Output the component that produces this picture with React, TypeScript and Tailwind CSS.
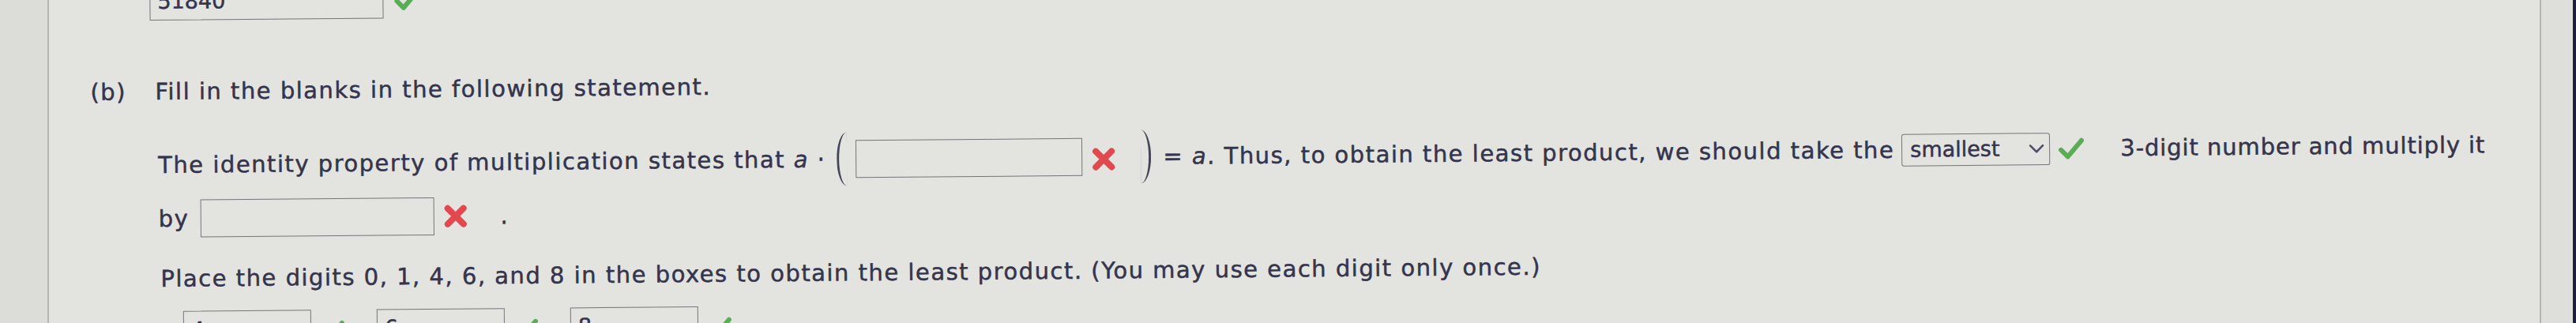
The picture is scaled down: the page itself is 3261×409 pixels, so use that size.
import React from 'react';

function Check({ className = '' }: { className?: string }) {
  return (
    <svg viewBox="0 0 36 30" className={`w-[36px] h-[30px] shrink-0 ${className}`}>
      <path
        d="M5 17 L13.5 25.5 L31 5"
        fill="none"
        stroke="#59ae55"
        strokeWidth="6"
        strokeLinecap="round"
        strokeLinejoin="round"
      />
    </svg>
  );
}

function Cross({ className = '' }: { className?: string }) {
  return (
    <svg viewBox="0 0 32 30" className={`w-[32px] h-[30px] shrink-0 ${className}`}>
      <path d="M6 5 L26 25 M26 5 L6 25" stroke="#e2494e" strokeWidth="8" strokeLinecap="round" />
    </svg>
  );
}

function Blank({ className = '', value = '' }: { className?: string; value?: string }) {
  return (
    <div
      className={`h-[48px] shrink-0 flex items-center pl-[9px] border-[1.5px] border-[#75757b] text-[27px] tracking-normal leading-normal ${className}`}
    >
      {value}
    </div>
  );
}

export default function App() {
  return (
    <div className="h-[409px] w-[3261px] overflow-hidden flex bg-[#e3e4e0] font-['DejaVu_Sans',Verdana,sans-serif] text-[#34344c] [-webkit-text-stroke:0.5px_#34344c]">
      <div className="w-[60px] shrink-0 bg-[#dcddd9]" />
      <div className="w-[2px] shrink-0 bg-[#b5b6b2]" />

      <main className="relative flex-1 overflow-hidden">
        <div className="rotate-[-0.5deg] origin-[138px_210px] pl-[53px] text-[29px] tracking-[1.5px]">
          {/* previous answer */}
          <div className="-mt-[22px] ml-[76px] h-[48px] flex items-center">
            <Blank className="w-[296px]" value="51840" />
            <Check className="ml-[12px]" />
          </div>

          {/* heading */}
          <div className="mt-[70px] flex leading-[40px]">
            <span className="w-[82px] shrink-0">(b)</span>
            <span>Fill in the blanks in the following statement.</span>
          </div>

          {/* identity statement */}
          <div className="mt-[38px] h-[70px] pl-[85px] flex items-center leading-[40px] whitespace-nowrap">
            <span>
              The identity property of multiplication states that <i>a</i> ·
            </span>
            <span className="ml-[14px] block w-[13px] h-[68px] border-l-[3px] border-[#45455a] rounded-l-[13px_34px]" />
            <Blank className="ml-[11px] w-[287px]" />
            <Cross className="ml-[11px] mt-[6px]" />
            <span className="ml-[31px] block w-[13px] h-[68px] border-r-[3px] border-[#45455a] rounded-r-[13px_34px]" />
            <span className="ml-[15px]">
              = <i>a</i>. Thus, to obtain the least product, we should take the
            </span>
            <div className="ml-[9px] w-[188px] h-[41px] shrink-0 flex items-center pl-[10px] pr-[6px] border-[1.5px] border-[#75757b] rounded-[3px] text-[27px] tracking-normal leading-normal">
              <span className="flex-1">smallest</span>
              <svg viewBox="0 0 20 12" className="w-[20px] h-[12px]">
                <path d="M2 2 L10 10 L18 2" fill="none" stroke="#50506a" strokeWidth="2.6" strokeLinecap="round" strokeLinejoin="round" />
              </svg>
            </div>
            <Check className="ml-[9px]" />
            <span className="ml-[44px] tracking-[0.9px]">3-digit number and multiply it</span>
          </div>

          <div className="mt-[8px] h-[50px] pl-[85px] flex items-center leading-[40px] whitespace-nowrap">
            <span>by</span>
            <Blank className="ml-[14px] w-[296px]" />
            <Cross className="ml-[11px]" />
            <span className="ml-[41px]">.</span>
          </div>

          {/* digits instruction */}
          <div className="mt-[31px] pl-[87px] leading-[40px] whitespace-nowrap">
            Place the digits 0, 1, 4, 6, and 8 in the boxes to obtain the least product. (You may use each digit only once.)
          </div>

          <div className="mt-[21px] pl-[115px] flex items-start">
            <Blank className="w-[162px]" value="4" />
            <Check className="ml-[8px] mt-[12px]" />
            <Blank className="ml-[39px] w-[162px]" value="6" />
            <Check className="ml-[8px] mt-[12px]" />
            <Blank className="ml-[39px] w-[162px]" value="8" />
            <Check className="ml-[8px] mt-[12px]" />
          </div>
        </div>
      </main>

      <div className="w-[2px] shrink-0 bg-[#b2b3af]" />
      <div className="w-[40px] shrink-0 bg-[#dedfdb]" />
      <div className="w-[4px] shrink-0 bg-[#1c2140]" />
    </div>
  );
}
